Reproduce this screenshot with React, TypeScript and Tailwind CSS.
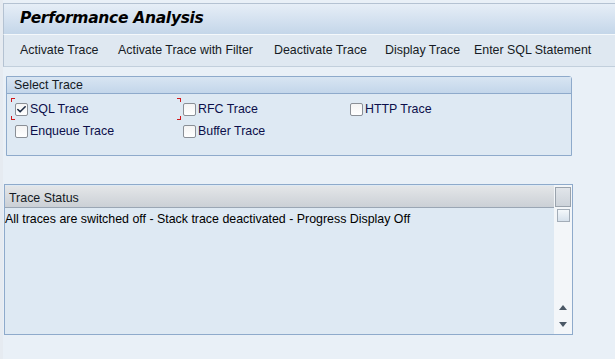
import { Check } from "lucide-react";

const font = { fontFamily: '"Liberation Sans", Arial, sans-serif' };

const toolbar = [
  { label: "Activate Trace", w: "w-[98px]" },
  { label: "Activate Trace with Filter", w: "w-[156px]" },
  { label: "Deactivate Trace", w: "w-[111px]" },
  { label: "Display Trace", w: "w-[89px]" },
  { label: "Enter SQL Statement", w: "" },
];

const Box = ({ checked }: { checked?: boolean }) => (
  <span className="flex h-[13px] w-[13px] shrink-0 items-center justify-center rounded-[2px] border border-[#8a8f96] bg-gradient-to-b from-[#f4f4f4] to-white">
    {checked && <Check size={11} strokeWidth={3.5} className="text-[#1d2c44]" />}
  </span>
);

const Option = ({ label, checked, focus }: { label: string; checked?: boolean; focus?: boolean }) => (
  <div className="relative flex h-[22px] items-center gap-[2px]">
    <Box checked={checked} />
    <span>{label}</span>
    {focus && (
      <>
        <span className="absolute -left-[4px] top-[0px] h-[4px] w-[4px] border-l border-t border-[#d0191d]" />
        <span className="absolute -left-[4px] bottom-[0px] h-[4px] w-[4px] border-b border-l border-[#d0191d]" />
        <span className="absolute right-[2px] top-[0px] h-[4px] w-[4px] border-r border-t border-[#d0191d]" />
        <span className="absolute right-[2px] bottom-[0px] h-[4px] w-[4px] border-b border-r border-[#d0191d]" />
      </>
    )}
  </div>
);

export default function App() {
  return (
    <div
      style={font}
      className="flex h-[359px] w-[615px] flex-col overflow-hidden border-l-[3px] border-l-[#e6ebf1] bg-[#e9f0f7] pt-[3px] text-[12.4px] text-[#10131a]"
    >
      {/* Title */}
      <div className="flex h-[31px] items-center border-l border-t border-[#b4c2d2] bg-gradient-to-b from-[#e6eef7] to-[#c4d6e9] pl-[16px]">
        <h1
          className="text-[15.5px] font-bold italic text-black"
          style={{ fontFamily: '"DejaVu Sans", Verdana, sans-serif', letterSpacing: "-0.3px" }}
        >
          Performance Analysis
        </h1>
      </div>

      {/* Toolbar */}
      <div className="flex h-[33px] items-center border-l border-t border-b border-l-[#b4c2d2] border-t-[#f4f8fb] border-b-[#c2cfdc] bg-[#dfe8f1] pl-[16px] text-[#161b24]">
        {toolbar.map((t) => (
          <span key={t.label} className={`${t.w} shrink-0 whitespace-nowrap`}>
            {t.label}
          </span>
        ))}
      </div>

      {/* Select Trace */}
      <div className="ml-[3px] mt-[9px] flex h-[80px] w-[566px] flex-col rounded-tr-[3px] border border-[#8eaacb] bg-[#dee9f3]">
        <div className="flex h-[17px] items-center border-b border-[#8eaacb] bg-gradient-to-b from-[#d8e5f2] to-[#c3d6ea] pl-[7px] text-[#141a24]">
          Select Trace
        </div>
        <div className="grid grid-cols-[168px_167px_1fr] pl-[8px] pt-[4px] text-[#0c0f4a]">
          <Option label="SQL Trace" checked focus />
          <Option label="RFC Trace" />
          <Option label="HTTP Trace" />
          <Option label="Enqueue Trace" />
          <Option label="Buffer Trace" />
        </div>
      </div>

      {/* Trace Status */}
      <div className="ml-[1px] mt-[28px] flex h-[151px] w-[569px] border border-[#8eaacb] bg-[#dee9f3]">
        <div className="flex flex-1 flex-col">
          <div className="mt-[1px] flex h-[22px] items-center border-b border-[#9aa6b4] bg-gradient-to-b from-[#e4e6e8] to-[#cbd0d6] pl-[4px] pt-[3px] text-[#141a24]">
            Trace Status
          </div>
          <div className="pt-[2px] text-black">
            All traces are switched off - Stack trace deactivated - Progress Display Off
          </div>
        </div>
        <div className="flex w-[18px] flex-col items-center bg-[#f3f6f9] pt-[2px]">
          <div className="h-[20px] w-[16px] border border-[#9aa3ad] bg-gradient-to-b from-[#e1e5ea] to-[#cdd3da]" />
          <div className="mt-[2px] h-[13px] w-[13px] border border-[#a3adb8] bg-gradient-to-b from-[#f4f8fb] to-[#d6e1ec]" />
          <div className="flex-1" />
          <div className="flex h-[16px] w-full items-center justify-center">
            <svg width="8" height="5" viewBox="0 0 8 5">
              <path d="M0 5 L4 0 L8 5 Z" fill="#4b5866" />
            </svg>
          </div>
          <div className="mb-[3px] mt-[2px] flex h-[14px] w-full items-center justify-center">
            <svg width="8" height="5" viewBox="0 0 8 5">
              <path d="M0 0 L8 0 L4 5 Z" fill="#4b5866" />
            </svg>
          </div>
        </div>
      </div>
    </div>
  );
}
